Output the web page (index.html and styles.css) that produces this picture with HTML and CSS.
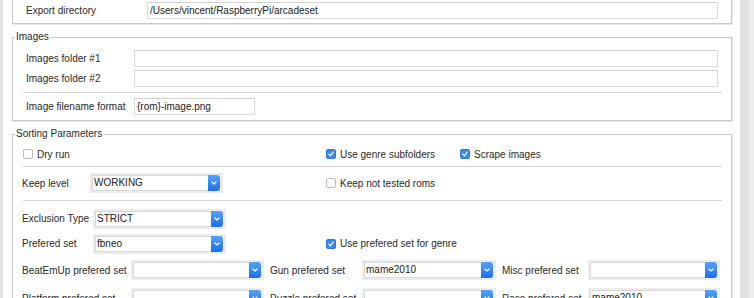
FILE: index.html
```html
<!DOCTYPE html>
<html lang="en">
<head>
    <meta charset="UTF-8">
    <meta name="viewport" content="width=device-width, initial-scale=1.0">
    <title>Arcade Set Sorter</title>
    <link rel="stylesheet" href="styles.css">
</head>
<body>
    <div class="window">
        <div class="edge"></div>

        <div class="main">
            <fieldset class="group export">
                <div class="group-body">
                    <div class="row">
                        <label class="label w-export">Export directory</label>
                        <input class="field grow" type="text" value="/Users/vincent/RaspberryPi/arcadeset">
                    </div>
                </div>
            </fieldset>

            <fieldset class="group images">
                <legend>Images</legend>
                <div class="group-body">
                    <div class="row">
                        <label class="label w-img">Images folder #1</label>
                        <input class="field grow" type="text">
                    </div>
                    <div class="row">
                        <label class="label w-img">Images folder #2</label>
                        <input class="field grow" type="text">
                    </div>
                    <div class="sep"></div>
                    <div class="row">
                        <label class="label w-img">Image filename format</label>
                        <input class="field short" type="text" value="{rom}-image.png">
                    </div>
                </div>
            </fieldset>

            <fieldset class="group sorting">
                <legend>Sorting Parameters</legend>
                <div class="group-body">
                    <div class="row">
                        <div class="col-left">
                            <span class="check"></span>
                            <span class="check-label">Dry run</span>
                        </div>
                        <div class="col-mid">
                            <span class="check on"><svg viewBox="0 0 10 10"><path d="M2.3 5.2 L4.2 7.2 L7.8 2.6"/></svg></span>
                            <span class="check-label">Use genre subfolders</span>
                        </div>
                        <div>
                            <span class="check on"><svg viewBox="0 0 10 10"><path d="M2.3 5.2 L4.2 7.2 L7.8 2.6"/></svg></span>
                            <span class="check-label">Scrape images</span>
                        </div>
                    </div>

                    <div class="sep first"></div>

                    <div class="row tall">
                        <div class="col-left">
                            <span class="label w-keep">Keep level</span>
                            <div class="popup">
                                <span class="popup-value">WORKING</span>
                                <span class="popup-btn"><svg viewBox="0 0 8 6"><path d="M2 2 L4 4 L6 2"/></svg></span>
                            </div>
                        </div>
                        <div>
                            <span class="check"></span>
                            <span class="check-label">Keep not tested roms</span>
                        </div>
                    </div>

                    <div class="sep second"></div>

                    <div class="row mid">
                        <div class="col-left">
                            <span class="label w-excl">Exclusion Type</span>
                            <div class="popup">
                                <span class="popup-value">STRICT</span>
                                <span class="popup-btn"><svg viewBox="0 0 8 6"><path d="M2 2 L4 4 L6 2"/></svg></span>
                            </div>
                        </div>
                    </div>

                    <div class="row mid">
                        <div class="col-left">
                            <span class="label w-excl">Prefered set</span>
                            <div class="popup">
                                <span class="popup-value">fbneo</span>
                                <span class="popup-btn"><svg viewBox="0 0 8 6"><path d="M2 2 L4 4 L6 2"/></svg></span>
                            </div>
                        </div>
                        <div>
                            <span class="check on"><svg viewBox="0 0 10 10"><path d="M2.3 5.2 L4.2 7.2 L7.8 2.6"/></svg></span>
                            <span class="check-label">Use prefered set for genre</span>
                        </div>
                    </div>

                    <div class="genre-grid">
                        <span class="label">BeatEmUp prefered set</span>
                        <div class="popup"><span class="popup-value"></span><span class="popup-btn"><svg viewBox="0 0 8 6"><path d="M2 2 L4 4 L6 2"/></svg></span></div>
                        <span class="label gap">Gun prefered set</span>
                        <div class="popup"><span class="popup-value">mame2010</span><span class="popup-btn"><svg viewBox="0 0 8 6"><path d="M2 2 L4 4 L6 2"/></svg></span></div>
                        <span class="label gap">Misc prefered set</span>
                        <div class="popup"><span class="popup-value"></span><span class="popup-btn"><svg viewBox="0 0 8 6"><path d="M2 2 L4 4 L6 2"/></svg></span></div>

                        <span class="label">Platform prefered set</span>
                        <div class="popup"><span class="popup-value"></span><span class="popup-btn"><svg viewBox="0 0 8 6"><path d="M2 2 L4 4 L6 2"/></svg></span></div>
                        <span class="label gap">Puzzle prefered set</span>
                        <div class="popup"><span class="popup-value"></span><span class="popup-btn"><svg viewBox="0 0 8 6"><path d="M2 2 L4 4 L6 2"/></svg></span></div>
                        <span class="label gap">Race prefered set</span>
                        <div class="popup"><span class="popup-value">mame2010</span><span class="popup-btn"><svg viewBox="0 0 8 6"><path d="M2 2 L4 4 L6 2"/></svg></span></div>
                    </div>
                </div>
            </fieldset>
        </div>

        <div class="scrollbar">
            <div class="scroll-track"></div>
            <div class="scroll-edge"></div>
        </div>
    </div>
</body>
</html>
```

FILE: styles.css
```css
html, body {
    margin: 0;
    padding: 0;
    height: 298px;
    overflow: hidden;
    background: #fff;
}
body {
    font-family: "Liberation Sans", Arial, sans-serif;
    font-size: 10px;
    color: #2a2a2a;
}
.window {
    display: flex;
    height: 298px;
}
.edge {
    width: 3px;
    background: #e3e3e3;
}
.main {
    flex: 1;
    min-width: 0;
}
.scrollbar {
    width: 14px;
    display: flex;
}
.scroll-track {
    width: 9px;
    background: #e2e2e2;
}
.scroll-edge {
    flex: 1;
    background: #ececec;
}

/* group boxes */
.group {
    border: 1px solid #c9c9c9;
    box-shadow: 1px 1px 0 #e8e8e8;
    margin: 7px 8px 0 9px;
    padding: 0;
    min-width: 0;
}
.group legend {
    margin-left: 2px;
    padding: 0 1px;
    font-size: 10px;
    line-height: 12px;
}
.group.export {
    margin-top: -1px;
}
.group-body {
    padding: 0 9px 4px 10px;
}
.export .group-body {
    padding-bottom: 3px;
}
.images .group-body {
    padding-top: 5px;
}
.sorting .group-body {
    padding-top: 4px;
    padding-left: 9px;
}

.row {
    display: flex;
    align-items: center;
    height: 20px;
}
.images .row,
.export .row {
    padding: 0 4px 0 3px;
}
.row.tall {
    height: 24px;
}
.row.mid {
    height: 25px;
}
.sep {
    height: 1px;
    background: #d2d2d2;
    margin: 4px 0 3px;
}
.sorting .sep {
    margin-left: 1px;
}
.sep.first {
    margin: 2px 0 4px 1px;
}
.sep.second {
    margin: 5px 0 5px 1px;
}

.label {
    flex-shrink: 0;
    white-space: nowrap;
}
.w-export { width: 121px; }
.w-img { width: 108px; }
.w-keep { width: 68px; }
.w-excl { width: 71px; }

.field {
    height: 17px;
    box-sizing: border-box;
    border: 1px solid #dcdcdc;
    border-top-color: #d2d2d2;
    background: #fff;
    font-family: inherit;
    font-size: 10px;
    color: #222;
    padding: 0 2px;
    margin: 0;
    outline: none;
}
.grow { flex: 1; min-width: 0; }
.short { width: 121px; }

/* checkbox columns */
.col-left {
    width: 304px;
    display: flex;
    align-items: center;
    flex-shrink: 0;
}
.col-mid {
    width: 134px;
    flex-shrink: 0;
}
.row > div {
    display: flex;
    align-items: center;
}
.check {
    width: 10px;
    height: 10px;
    border: 1px solid #bdbdbd;
    border-radius: 2px;
    background: #fff;
    box-sizing: border-box;
    display: inline-block;
    flex-shrink: 0;
}
.col-left > .check {
    margin-left: 1px;
}
.check.on {
    background: #3b88f6;
    border-color: #2d78ea;
}
.check svg {
    display: block;
    width: 8px;
    height: 8px;
}
.check svg path {
    fill: none;
    stroke: #fff;
    stroke-width: 1.5;
    stroke-linecap: round;
    stroke-linejoin: round;
}
.check-label {
    margin-left: 4px;
    white-space: nowrap;
}

/* popup buttons */
.popup {
    width: 133px;
    height: 20px;
    box-sizing: border-box;
    padding: 2px 3px 2px 2px;
    background: #ececec;
    display: flex;
    flex-shrink: 0;
}
.popup-value {
    flex: 1;
    background: #fff;
    border: 1px solid #d8d8d8;
    border-right: none;
    padding-left: 1px;
    line-height: 14px;
    color: #222;
    white-space: nowrap;
    overflow: hidden;
}
.popup-btn {
    width: 12px;
    background: linear-gradient(#56a2f9, #1b6ef1);
    border-radius: 0 3px 3px 0;
    display: flex;
    align-items: center;
    justify-content: center;
}
.popup-btn svg {
    width: 8px;
    height: 6px;
}
.popup-btn svg path {
    fill: none;
    stroke: #fff;
    stroke-width: 1.2;
    stroke-linecap: round;
    stroke-linejoin: round;
}

.genre-grid {
    display: grid;
    grid-template-columns: 109px 133px 98px 134px 92px 132px;
    grid-auto-rows: 28px;
    align-items: center;
}
.genre-grid > .popup {
    width: auto;
}
.genre-grid > .label.gap {
    padding-left: 6px;
}
```
